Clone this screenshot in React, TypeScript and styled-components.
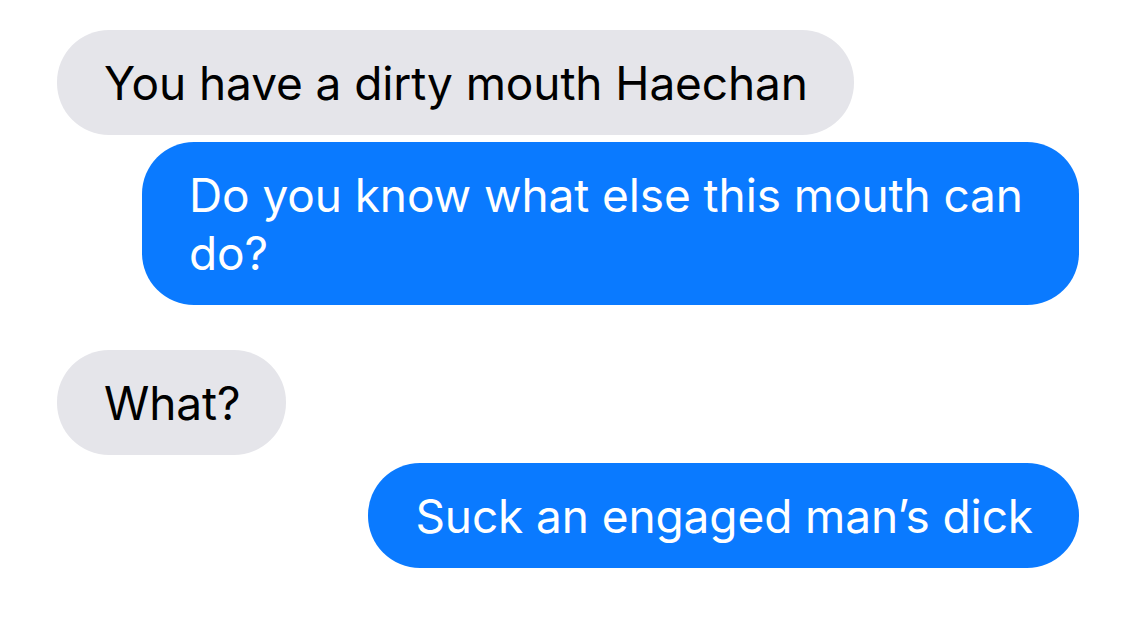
import React from "react";
import styled, { createGlobalStyle } from "styled-components";

const Global = createGlobalStyle`
  html, body { margin: 0; padding: 0; background: #ffffff; }
  body { font-family: Inter, "Liberation Sans", Arial, sans-serif; }
`;

const Thread = styled.div`
  width: 1125px;
  height: 638px;
  box-sizing: border-box;
  padding: 30px 46px 0 57px;
  display: flex;
  flex-direction: column;
  background: #ffffff;
`;

const Bubble = styled.div<{ $me?: boolean; $gap: number; $w?: number }>`
  align-self: ${(p) => (p.$me ? "flex-end" : "flex-start")};
  margin-top: ${(p) => p.$gap}px;
  background: ${(p) => (p.$me ? "#0A7AFF" : "#E5E5EA")};
  color: ${(p) => (p.$me ? "#ffffff" : "#000000")};
  ${(p) => (p.$w ? `width: ${p.$w}px;` : "")}
  box-sizing: border-box;
  padding: 24px 46px 23px 47px;
  border-radius: 52px;
  font-size: 46px;
  line-height: 58px;
  letter-spacing: -0.1px;
`;

export default function App() {
  return (
    <>
      <Global />
      <Thread>
        <Bubble $gap={0}>You have a dirty mouth Haechan</Bubble>
        <Bubble $me $gap={7} $w={937}>
          Do you know what else this mouth can do?
        </Bubble>
        <Bubble $gap={45}>What?</Bubble>
        <Bubble $me $gap={8}>Suck an engaged man’s dick</Bubble>
      </Thread>
    </>
  );
}
